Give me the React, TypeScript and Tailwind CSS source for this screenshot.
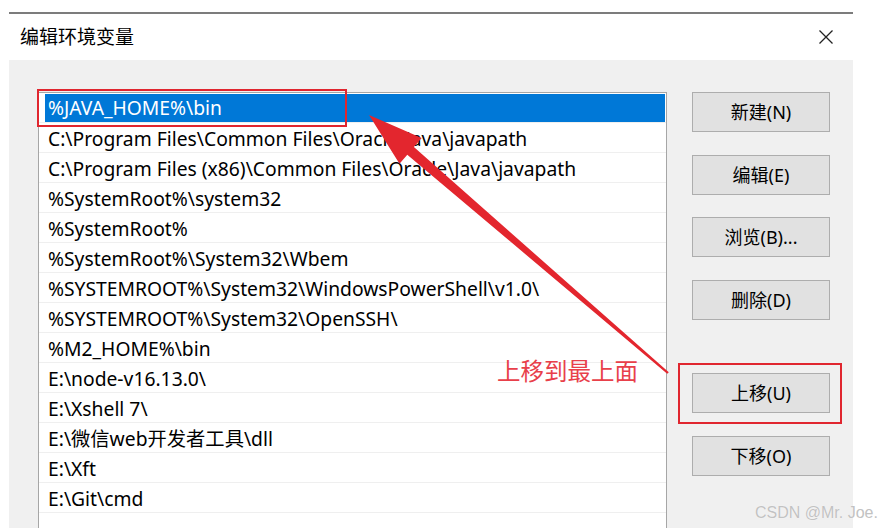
import React from "react";

const rows = [
  "%JAVA_HOME%\\bin",
  "C:\\Program Files\\Common Files\\Oracle\\Java\\javapath",
  "C:\\Program Files (x86)\\Common Files\\Oracle\\Java\\javapath",
  "%SystemRoot%\\system32",
  "%SystemRoot%",
  "%SystemRoot%\\System32\\Wbem",
  "%SYSTEMROOT%\\System32\\WindowsPowerShell\\v1.0\\",
  "%SYSTEMROOT%\\System32\\OpenSSH\\",
  "%M2_HOME%\\bin",
  "E:\\node-v16.13.0\\",
  "E:\\Xshell 7\\",
  "E:\\微信web开发者工具\\dll",
  "E:\\Xft",
  "E:\\Git\\cmd",
];

const buttons: { label: string; mt: string }[] = [
  { label: "新建(N)", mt: "mt-0" },
  { label: "编辑(E)", mt: "mt-[23px]" },
  { label: "浏览(B)...", mt: "mt-[22px]" },
  { label: "删除(D)", mt: "mt-[23px]" },
  { label: "上移(U)", mt: "mt-[53px]" },
  { label: "下移(O)", mt: "mt-[23px]" },
];

const font = "font-['Noto_Sans','Noto_Sans_CJK_SC',sans-serif]";

export default function App() {
  return (
    <div className={`relative w-[880px] h-[528px] overflow-hidden bg-white ${font}`}>
      <div className="ml-[9px] mt-[12px] w-[844px] h-[516px] border-t-2 border-[#7c7c7c] flex flex-col">
        {/* title bar */}
        <div className="h-[46px] bg-white flex items-center justify-between pl-[11px] pr-[19px]">
          <span className="text-[19px] text-black leading-none pt-[1px]">编辑环境变量</span>
          <svg width="16" height="16" viewBox="0 0 16 16">
            <path d="M1.5 1.5 L14.5 14.5 M14.5 1.5 L1.5 14.5" stroke="#222" strokeWidth="1.3" fill="none" />
          </svg>
        </div>
        {/* body */}
        <div className="flex-1 bg-[#f0f0f0] flex pl-[29px] pt-[32px]">
          <div className="w-[629px] flex-none bg-white border border-[#a6a6a6] border-b-0">
            {rows.map((r, i) => (
              <div key={i} className="h-[30px] border-b border-[#efefef] flex items-center">
                {i === 0 ? (
                  <div className="ml-[6px] mr-[1px] flex-1 h-[28px] bg-[#0078d7] text-white flex items-center pl-[3px] pt-[2px] text-[19.3px] whitespace-nowrap">
                    {r}
                  </div>
                ) : (
                  <span className="pl-[9px] pt-[3px] text-[19.3px] text-black whitespace-nowrap">{r}</span>
                )}
              </div>
            ))}
          </div>
          <div className="ml-[25px] flex flex-col">
            {buttons.map((b) => (
              <div
                key={b.label}
                className={`${b.mt} w-[138px] h-[40px] bg-[#e1e1e1] border border-[#adadad] flex items-center justify-center pt-[1px] text-[18px] text-black`}
              >
                {b.label}
              </div>
            ))}
          </div>
        </div>
      </div>

      {/* annotations */}
      <div className="absolute left-[37px] top-[89px] w-[310px] h-[38px] border-2 border-[#e0262f]" />
      <div className="absolute left-[678px] top-[363px] w-[164px] h-[61px] border-2 border-[#e0262f]" />
      <div className="absolute left-[497px] top-[355px] text-[23.5px] leading-[32px] text-[#e8404a] whitespace-nowrap">
        上移到最上面
      </div>
      <svg className="absolute left-0 top-0" width="880" height="528" viewBox="0 0 880 528">
        <polygon
          points="369,115 421.7,138 413.9,147.1 668.8,372.3 667.2,373.7 407.3,154.7 399.5,163.8"
          fill="#e3262e"
        />
      </svg>
      <div className="absolute left-[755px] top-[502px] text-[16px] leading-[22px] text-[#c2c2c2] font-['Liberation_Sans',sans-serif] whitespace-nowrap [text-shadow:0_0_1px_#fff]">
        CSDN @Mr. Joe.
      </div>
    </div>
  );
}
